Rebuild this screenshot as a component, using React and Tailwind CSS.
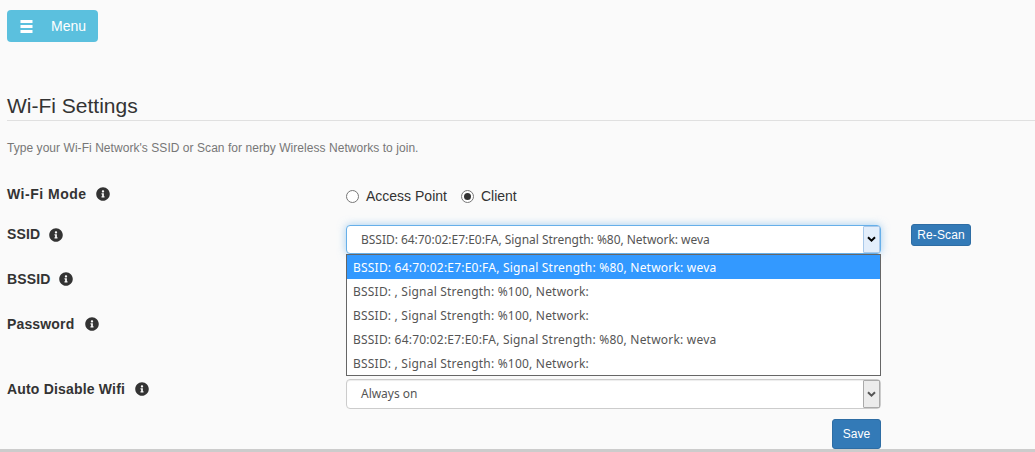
import React from "react";
import { FaInfoCircle } from "react-icons/fa";

const arial = "font-['Liberation_Sans',Arial,sans-serif]";
const tahoma = "font-['Noto_Sans',Tahoma,sans-serif]";

function Chevron({ dark }) {
  return (
    <svg width="9" height="7" viewBox="0 0 9 7" className={dark ? "text-black" : "text-[#555]"}>
      <path d="M1 1.2 L4.5 4.6 L8 1.2" fill="none" stroke="currentColor" strokeWidth="2" />
    </svg>
  );
}

function Bars() {
  return (
    <svg width="13" height="13" viewBox="0 0 13 13" fill="white">
      <rect x="0.5" y="0" width="12" height="3" />
      <rect x="0.5" y="5" width="12" height="3" />
      <rect x="0.5" y="10" width="12" height="3" />
    </svg>
  );
}

function Label({ children, className = "" }) {
  return (
    <div className={`flex items-center text-[14px] font-bold text-[#333] ${className}`}>
      <span>{children}</span>
      <FaInfoCircle className="w-[14px] h-[14px] text-[#333]" />
    </div>
  );
}

function Select({ focused, children }) {
  return (
    <div
      className={`-ml-px w-[535px] h-full flex items-stretch bg-white rounded-[4px] border ${
        focused
          ? "border-[#66afe9] shadow-[0_0_8px_rgba(102,175,233,0.6)]"
          : "border-[#ccc] shadow-[inset_0_1px_1px_rgba(0,0,0,0.075)]"
      }`}
    >
      <div className={`flex-1 flex items-center pl-[14px] text-[12px] tracking-[-0.03px] text-[#555] ${tahoma}`}>{children}</div>
      <div
        className={`w-[17px] flex items-center justify-center border rounded-[1px] ${
          focused ? "bg-[#e3eefb] border-[#a9c9ea]" : "bg-[#ececec] border-[#aaa]"
        }`}
      >
        <Chevron dark={focused} />
      </div>
    </div>
  );
}

const options = [
  "BSSID: 64:70:02:E7:E0:FA, Signal Strength: %80, Network: weva",
  "BSSID: , Signal Strength: %100, Network:",
  "BSSID: , Signal Strength: %100, Network:",
  "BSSID: 64:70:02:E7:E0:FA, Signal Strength: %80, Network: weva",
  "BSSID: , Signal Strength: %100, Network:",
];

export default function App() {
  return (
    <div className={`w-[1035px] h-[452px] overflow-hidden bg-[#fafafa] border-b-[3px] border-[#ccc] pl-[7px] pt-[10px] ${arial}`}>
      <button className="w-[91px] h-[32px] flex items-center bg-[#5bc0de] rounded-[4px] text-white text-[14px] pl-[13px]">
        <Bars />
        <span className="ml-[18px]">Menu</span>
      </button>

      <h2 className="mt-[52px] h-[26px] text-[21px] leading-[24px] text-[#333] border-b border-[#e0e0e0] box-content">
        Wi-Fi Settings
      </h2>

      <p className="mt-[19px] text-[12px] leading-[16px] tracking-[0.05px] text-[#777]">
        Type your Wi-Fi Network's SSID or Scan for nerby Wireless Networks to join.
      </p>

      <div className="mt-[30px] grid grid-cols-[340px_534px] items-center">
        <Label className="h-[20px] -mt-[4px] gap-[9px] tracking-[0.5px]">Wi-Fi Mode</Label>
        <div className="-ml-px h-[20px] flex items-center text-[14px] text-[#333]">
          <span className="w-[13px] h-[13px] rounded-full border border-[#777] bg-white" />
          <span className="ml-[7px]">Access Point</span>
          <span className="ml-[14px] w-[13px] h-[13px] rounded-full border border-[#777] bg-white flex items-center justify-center">
            <span className="w-[7px] h-[7px] rounded-full bg-[#333]" />
          </span>
          <span className="ml-[7px]">Client</span>
        </div>
      </div>

      <div className="mt-[19px] grid grid-cols-[340px_534px_auto] items-center h-[29px] relative">
        <Label className="-mt-[10px] gap-[9px] tracking-[0.15px]">SSID</Label>
        <Select focused>BSSID: 64:70:02:E7:E0:FA, Signal Strength: %80, Network: weva</Select>
        <button className="ml-[30px] -mt-[9px] w-[60px] h-[22px] bg-[#337ab7] border border-[#2e6da4] rounded-[3px] text-white text-[12px] tracking-[0.1px]">
          Re-Scan
        </button>
        <div className={`absolute left-[339px] top-[29px] w-[535px] border border-[#666] bg-white text-[12px] tracking-[0.21px] text-[#555] ${tahoma}`}>
          {options.map((o, i) => (
            <div
              key={i}
              className={`h-[24px] flex items-center pl-[6px] pt-[2px] ${i === 0 ? "bg-[#3399ff] text-white" : ""}`}
            >
              {o}
            </div>
          ))}
        </div>
      </div>

      <Label className="mt-[15px] h-[20px] gap-[8px] tracking-[0.15px]">BSSID</Label>
      <Label className="mt-[25px] h-[20px] gap-[11px] tracking-[0.15px]">Password</Label>

      <div className="mt-[45px] grid grid-cols-[340px_534px] items-center h-[30px]">
        <Label className="-mt-[10px] gap-[10px] tracking-[0.18px]">Auto Disable Wifi</Label>
        <Select>Always on</Select>
      </div>

      <div className="mt-[10px] w-[874px] flex justify-end">
        <button className="w-[49px] h-[30px] bg-[#337ab7] border border-[#2e6da4] rounded-[3px] text-white text-[12px]">
          Save
        </button>
      </div>
    </div>
  );
}
